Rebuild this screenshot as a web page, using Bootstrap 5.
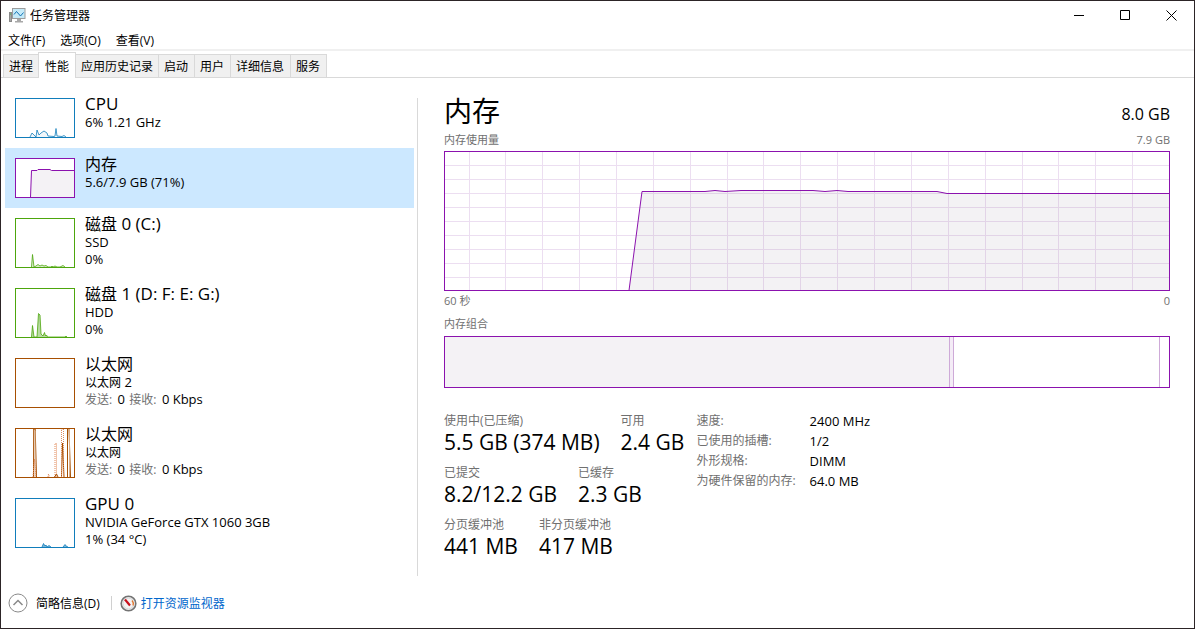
<!DOCTYPE html>
<html lang="zh-CN">
<head>
<meta charset="utf-8">
<meta name="viewport" content="width=device-width, initial-scale=1">
<title>任务管理器</title>
<link href="https://cdn.jsdelivr.net/npm/bootstrap@5.3.0/dist/css/bootstrap.min.css" rel="stylesheet">
<style>
  body { font: 12px/17px "Open Sans", "Noto Sans CJK SC", sans-serif; color: #000; background: #fff; }
  button { color: inherit; }
  .tm-window { min-height: 100vh; border: 1px solid #2c2426; }
  .titlebar { height: 29px; padding-left: 8px; }
  .caption-btn { width: 46px; height: 29px; padding: 0; border: 0; background: none; display: grid; place-items: center; }
  .menubar { height: 19px; padding: 2px 0 0 7px; gap: 15px; }
  .menu-rule { height: 2px; background: #f0f0f0; }
  .menu-btn, .foot-btn { border: 0; background: none; padding: 0; }
  .tm-tabs { height: 27px; padding: 0 2px; border-bottom: 1px solid #d9d9d9; align-items: flex-end; flex-wrap: nowrap; }
  .tm-tabs .nav-link { height: 23px; line-height: 17px; padding: 3px 5px 2px; border: 1px solid #d9d9d9; border-width: 1px 1px 0 0; border-radius: 0; margin: 0; background: #f0f0f0; color: #000; }
  .tm-tabs .nav-item:first-child .nav-link { border-left-width: 1px; }
  .tm-tabs .nav-item:nth-child(n+4) .nav-link { padding-right: 6px; }
  .tm-tabs .nav-link.active { height: 26px; margin: 0 0 -1px -1px; padding: 3px 6px 2px; border-left-width: 1px; background: #fff; border-color: #d9d9d9; color: #000; }
  .side { flex: 0 0 409px; margin: 10px 3px 0 4px; }
  .side .list-group-item { border: 0; margin: 0 !important; padding: 6px 10px 0; height: 70px; gap: 10px; border-radius: 0; background: none; color: #000; text-align: left; }
  .side .list-group-item.short { height: 60px; }
  .side .list-group-item.active { background: #cce8ff; }
  .res-name { font-size: 16px; line-height: 20px; }
  .res-latin { font-size: 17px; }
  .latin { font-size: 13px; line-height: 17px; }
  .rate { margin: 0 1px 0 2px; }
  .thumb { width: 60px; height: 50px; margin-top: 4px; flex: none; border: 1px solid; background: #fff; }
  .short .thumb { height: 40px; }
  .thumb svg, .plot svg { display: block; width: 100%; height: 100%; }
  .blue { color: #117dbb; } .purple { color: #8b12ae; } .green { color: #4da60c; } .brown { color: #a74f01; }
  .muted { color: #707070; }
  .splitter { width: 1px; background: #d9d9d9; margin: 20px 0 2px; }
  .detail { padding: 16px 24px 0 26px; min-width: 0; }
  .res-title { font-size: 28px; line-height: 34px; font-weight: 400; margin: 0; }
  .capacity { font-size: 16px; line-height: 20px; }
  .scale { font-size: 11px; line-height: 17px; }
  .scale-top { padding: 3px 0; }
  .scale-bottom { padding: 1px 0 6px; }
  .plot { border: 1px solid #8b12ae; }
  .usage { height: 140px; }
  .composition { height: 52px; }
  .seg-used { width: 69.8%; background: #f4f2f5; border-right: 1px solid #ceaad8; }
  .seg-modified { width: 4px; background: #f4ecf6; border-right: 1px solid #ceaad8; }
  .seg-standby { border-right: 1px solid #ceaad8; }
  .seg-free { width: 9px; }
  .stats { gap: 12px; margin-top: 24px; }
  .stat-group { height: 52px; gap: 21px; }
  .stat-num { font-size: 21px; line-height: 26px; }
  .specs { line-height: 20px; margin-top: -1px; }
  .specs th { font-weight: 400; padding: 0 14px 0 0; }
  .specs td { font-size: 13px; padding: 0; }
  .footbar { height: 50px; padding-left: 7px; }
  .foot-rule { width: 1px; height: 14px; background: #d0d0d0; margin: 0 8px 0 11px; }
  .foot-link { color: #0066cc; text-decoration: none; }
</style>
</head>
<body>
<div class="tm-window d-flex flex-column">
  <header>
    <div class="titlebar d-flex align-items-center">
      <svg width="17" height="15" viewBox="0 0 17 15" aria-hidden="true">
        <rect x=".5" y="4.500" width="2" height="9" fill="#a8a8a8" stroke="#8a8a8a"/>
        <path d="M1 6h1" stroke="#39b54a"/>
        <rect x="3.500" y=".5" width="12.500" height="10" fill="#c5eaf8" stroke="#9c9c9c"/>
        <path d="M5 6.500 7.500 3.500 11.500 8 14.500 4.500" fill="none" stroke="#1273b5"/>
        <path d="M8 11h4v2h2v1.500H6V13h2z" fill="#a8a8a8"/>
      </svg>
      <span class="ms-1 me-auto">任务管理器</span>
      <button class="caption-btn" aria-label="最小化"><svg width="11" height="11"><path d="M0 5.500h10" stroke="#000"/></svg></button>
      <button class="caption-btn" aria-label="最大化"><svg width="11" height="11"><path d="M.5.5h9v9h-9z" fill="none" stroke="#000"/></svg></button>
      <button class="caption-btn" aria-label="关闭"><svg width="11" height="11"><path d="m.5.5 10 10m0-10-10 10" stroke="#000"/></svg></button>
    </div>
    <nav class="menubar d-flex align-items-center" aria-label="菜单">
      <button class="menu-btn">文件(F)</button>
      <button class="menu-btn">选项(O)</button>
      <button class="menu-btn">查看(V)</button>
    </nav>
    <div class="menu-rule"></div>
    <ul class="nav nav-tabs tm-tabs">
      <li class="nav-item"><button class="nav-link">进程</button></li>
      <li class="nav-item"><button class="nav-link active" aria-current="page">性能</button></li>
      <li class="nav-item"><button class="nav-link">应用历史记录</button></li>
      <li class="nav-item"><button class="nav-link">启动</button></li>
      <li class="nav-item"><button class="nav-link">用户</button></li>
      <li class="nav-item"><button class="nav-link">详细信息</button></li>
      <li class="nav-item"><button class="nav-link">服务</button></li>
    </ul>
  </header>

  <main class="d-flex flex-grow-1">
    <div class="side list-group">
      <button class="list-group-item short d-flex">
        <span class="thumb blue"><svg viewBox="0 0 58 38" preserveAspectRatio="none"><path d="M14 38 16 34 19 37 20 38 21 31 23 36 25 34 28 32 31 34 32 37 38 37.500 39 37 40 29.500 41 37 46 37.500 48 36.500 50 38" fill="#f1f6fa" stroke="currentColor" stroke-width=".8"/></svg></span>
        <span><span class="res-name res-latin d-block">CPU</span><span class="latin d-block">6% 1.21 GHz</span></span>
      </button>
      <button class="list-group-item short active d-flex" aria-current="true">
        <span class="thumb purple"><svg viewBox="0 0 58 38" preserveAspectRatio="none"><path d="M14.500 38.500 15.500 11.500H21L22 10.500H34L35.500 11.500H58.500V38.500" fill="#f4f2f5" stroke="currentColor"/></svg></span>
        <span><span class="res-name d-block">内存</span><span class="latin d-block">5.6/7.9 GB (71%)</span></span>
      </button>
      <button class="list-group-item d-flex">
        <span class="thumb green"><svg viewBox="0 0 58 48" preserveAspectRatio="none"><path d="M15.500 48 16.500 35.500 18 48 20 47 22 45.500 24 47 26 46 28 47 30 46.500 32 48H35L36 47 37 48 39 47 41 48H44L47 46.500 49 48" fill="#dcedce" stroke="currentColor" stroke-width=".8"/></svg></span>
        <span><span class="res-name d-block">磁盘<span class="res-latin"> 0 (C:)</span></span><span class="latin d-block">SSD</span><span class="latin d-block">0%</span></span>
      </button>
      <button class="list-group-item d-flex">
        <span class="thumb green"><svg viewBox="0 0 58 48" preserveAspectRatio="none"><path d="M15.500 48 16.500 36.500 18 48H21L22.500 24.500 24 26 25 45 27 47 28.500 43.500 29.500 47 30.500 46 31.500 48H49L50 47 51 48" fill="#b7daa0" stroke="currentColor" stroke-width=".8"/></svg></span>
        <span><span class="res-name d-block">磁盘<span class="res-latin"> 1 (D: F: E: G:)</span></span><span class="latin d-block">HDD</span><span class="latin d-block">0%</span></span>
      </button>
      <button class="list-group-item d-flex">
        <span class="thumb brown"></span>
        <span><span class="res-name d-block">以太网</span><span class="d-block">以太网<span class="latin"> 2</span></span><span class="d-block"><span class="muted">发送:</span><span class="latin rate"> 0 </span><span class="muted">接收:</span><span class="latin rate"> 0 Kbps</span></span></span>
      </button>
      <button class="list-group-item d-flex">
        <span class="thumb brown"><svg viewBox="0 0 58 48" preserveAspectRatio="none" fill="none" stroke="currentColor"><path d="M17.500 48 17.700 0H19.200L20.500 48M45.500 48 46.500 14 48 48M51.500 0V48M53 0 54.500 48"/><path d="M19 2v46M53.500 0v48" stroke="#d8ad88"/><path d="M17 48 18.500 30 20 48M32 48 32.500 45 33.500 48M39 48V14.500H40.500V48M45.500 48V0H47.500V48" stroke="#e08a5b" stroke-dasharray="1 1"/><path d="M38.500 48 40.500 45 42 48"/></svg></span>
        <span><span class="res-name d-block">以太网</span><span class="d-block">以太网</span><span class="d-block"><span class="muted">发送:</span><span class="latin rate"> 0 </span><span class="muted">接收:</span><span class="latin rate"> 0 Kbps</span></span></span>
      </button>
      <button class="list-group-item d-flex">
        <span class="thumb blue"><svg viewBox="0 0 58 48" preserveAspectRatio="none"><path d="M26 48 27.500 44.500 29 47 30 46 31 48 33 46.500 35 48M47 48 49 45.500 50 47 52 48" fill="#7cb8da" stroke="currentColor" stroke-width=".8"/></svg></span>
        <span><span class="res-name res-latin d-block">GPU 0</span><span class="latin d-block">NVIDIA GeForce GTX 1060 3GB</span><span class="latin d-block">1% (34 °C)</span></span>
      </button>
    </div>
    <div class="splitter"></div>
    <section class="detail flex-grow-1">
      <div class="d-flex justify-content-between align-items-end">
        <h1 class="res-title">内存</h1>
        <span class="capacity mb-1">8.0 GB</span>
      </div>
      <div class="scale scale-top muted d-flex justify-content-between"><span>内存使用量</span><span>7.9 GB</span></div>
      <div class="plot usage">
        <svg viewBox="0 0 724 138" preserveAspectRatio="none" role="img" aria-label="内存使用量">
          <g stroke="#ecdef1" shape-rendering="crispEdges">
            <path d="M24.500 0V138M60.500 0V138M97.500 0V138M134.500 0V138M171.500 0V138M208.500 0V138M245.500 0V138M282.500 0V138M318.500 0V138M355.500 0V138M392.500 0V138M429.500 0V138M466.500 0V138M503.500 0V138M540.500 0V138M577.500 0V138M613.500 0V138M650.500 0V138M687.500 0V138"/>
            <path d="M0 13.500H724M0 27.500H724M0 41.500H724M0 55.500H724M0 69.500H724M0 83.500H724M0 97.500H724M0 111.500H724M0 125.500H724"/>
          </g>
          <path d="M184 138.500 197 39.500H260L270 38.500 280 39.500 296 38.500H368L380 39.500 392 38.500 403 39.500H492L502 41.500H725V138.500Z" fill="#8b7b95" fill-opacity=".1"/>
          <path d="M184 138.500 197 39.500H260L270 38.500 280 39.500 296 38.500H368L380 39.500 392 38.500 403 39.500H492L502 41.500H725" fill="none" stroke="#8b12ae"/>
        </svg>
      </div>
      <div class="scale scale-bottom muted d-flex justify-content-between"><span>60 秒</span><span>0</span></div>
      <div class="scale muted pb-1">内存组合</div>
      <div class="plot composition d-flex">
        <div class="seg-used"></div><div class="seg-modified"></div><div class="seg-standby flex-grow-1"></div><div class="seg-free"></div>
      </div>
      <div class="stats d-flex">
        <div>
          <div class="stat-group d-flex">
            <div><div class="muted">使用中(已压缩)</div><div class="stat-num">5.5 GB (374 MB)</div></div>
            <div><div class="muted">可用</div><div class="stat-num">2.4 GB</div></div>
          </div>
          <div class="stat-group d-flex">
            <div><div class="muted">已提交</div><div class="stat-num">8.2/12.2 GB</div></div>
            <div><div class="muted">已缓存</div><div class="stat-num">2.3 GB</div></div>
          </div>
          <div class="stat-group d-flex">
            <div><div class="muted">分页缓冲池</div><div class="stat-num">441 MB</div></div>
            <div><div class="muted">非分页缓冲池</div><div class="stat-num">417 MB</div></div>
          </div>
        </div>
        <div>
          <table class="specs">
            <tr><th class="muted" scope="row">速度:</th><td>2400 MHz</td></tr>
            <tr><th class="muted" scope="row">已使用的插槽:</th><td>1/2</td></tr>
            <tr><th class="muted" scope="row">外形规格:</th><td>DIMM</td></tr>
            <tr><th class="muted" scope="row">为硬件保留的内存:</th><td>64.0 MB</td></tr>
          </table>
        </div>
      </div>
    </section>
  </main>

  <footer class="footbar d-flex align-items-center">
    <button class="foot-btn d-flex align-items-center">
      <svg class="me-2" width="20" height="20" viewBox="0 0 20 20" fill="none" aria-hidden="true"><circle cx="10" cy="10" r="9" stroke="#8a8a8a"/><path d="m5.500 12 4.500-4.500 4.500 4.500" stroke="#8a8a8a" stroke-width="1.500"/></svg>
      <span>简略信息(D)</span>
    </button>
    <span class="foot-rule"></span>
    <a href="#" class="foot-link d-flex align-items-center">
      <svg class="me-1" width="17" height="17" viewBox="0 0 17 17" fill="none" aria-hidden="true"><circle cx="8.500" cy="8.500" r="7.300" fill="#f3f3f3" stroke="#737373" stroke-width="1.600"/><circle cx="8.500" cy="8.500" r="5.500" stroke="#d5d5d5"/><path d="M12 5.500a5 5 0 0 1 1 5" stroke="#e3762c" stroke-width="1.300"/><path d="m5 4.500 5 6" stroke="#c8101c" stroke-width="2.200"/></svg>
      <span>打开资源监视器</span>
    </a>
  </footer>
</div>
<script src="https://cdn.jsdelivr.net/npm/bootstrap@5.3.0/dist/js/bootstrap.bundle.min.js"></script>
</body>
</html>
